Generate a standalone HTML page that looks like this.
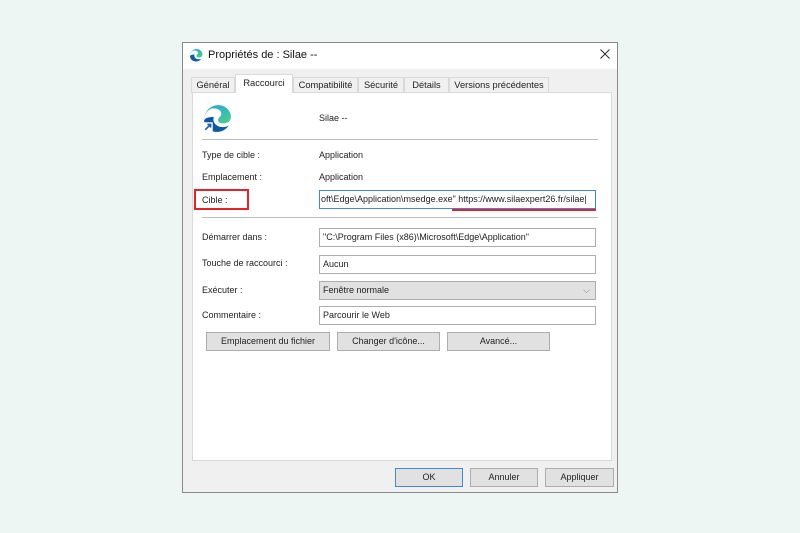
<!DOCTYPE html>
<html><head><meta charset="utf-8"><style>
*{margin:0;padding:0;box-sizing:border-box}
body{width:800px;height:533px;background:#eef6f4;position:relative;overflow:hidden;font-family:"Liberation Sans",sans-serif;font-size:9px;color:#222}
.a{position:absolute;white-space:nowrap}
.win{left:182px;top:42px;width:436px;height:451px;background:#f0f0f0;border:1px solid #888}
.title{left:183px;top:43px;width:434px;height:26px;background:#fff}
.tab{position:absolute;top:77px;height:16px;border:1px solid #d9d9d9;border-bottom:none;background:#f0f0f0;text-align:center;line-height:15px;font-size:9.3px}
.panel{left:192px;top:92px;width:420px;height:369px;background:#fff;border:1px solid #d9d9d9}
.sep{position:absolute;left:202px;width:396px;height:1px;background:#bbb}
.inp{position:absolute;left:319px;width:277px;height:19px;border:1px solid #adadad;background:#fff;padding-left:3px;line-height:17px;overflow:hidden;white-space:nowrap}
.btn{position:absolute;height:19px;background:#e1e1e1;border:1px solid #adadad;text-align:center;line-height:17px}
</style></head><body>
<div class="a win"></div>
<div class="a title"></div>
<svg class="a" style="left:189px;top:48px" width="14" height="14" viewBox="0 0 28 28">
<defs><linearGradient id="g" x1="0" y1="0" x2="1" y2="1"><stop offset="0" stop-color="#1fa0e0"/><stop offset="1" stop-color="#4fd08a"/></linearGradient></defs>
<path d="M2 16C2 7 9 2 15 2c7 0 12 5 12 11 0 4-3 6-7 6-3 0-5-1-5-3 0-3 3-3 3-6 0-3-3-5-7-5C6 5 2 10 2 16z" fill="url(#g)"/>
<path d="M2 16c0 7 6 11 12 11 5 0 9-3 11-6-3 2-8 2-11 0-3-2-4-5-3-8-4 0-8 1-9 3z" fill="#0c59a4"/></svg>
<div class="a" style="left:208px;top:49px;font-size:11px;color:#111">Propriétés de : Silae --</div>
<svg class="a" style="left:600px;top:49px" width="10" height="10" viewBox="0 0 10 10"><path d="M0.5 0.5L9.5 9.5M9.5 0.5L0.5 9.5" stroke="#333" stroke-width="1.1"/></svg>
<div class="tab" style="left:191px;width:44px">Général</div>
<div class="tab" style="left:235px;top:74px;height:19px;width:58px;background:#fff;z-index:2;line-height:16px">Raccourci</div>
<div class="tab" style="left:293px;width:65px">Compatibilité</div>
<div class="tab" style="left:358px;width:46px">Sécurité</div>
<div class="tab" style="left:404px;width:45px">Détails</div>
<div class="tab" style="left:449px;width:100px">Versions précédentes</div>
<div class="a panel"></div>
<svg class="a" style="left:202px;top:103px" width="30" height="30" viewBox="0 0 28 28">
<path d="M2 16C2 7 9 2 15 2c7 0 12 5 12 11 0 4-3 6-7 6-3 0-5-1-5-3 0-3 3-3 3-6 0-3-3-5-7-5C6 5 2 10 2 16z" fill="url(#g)"/>
<path d="M2 16c0 7 6 11 12 11 5 0 9-3 11-6-3 2-8 2-11 0-3-2-4-5-3-8-4 0-8 1-9 3z" fill="#0c59a4"/>
<rect x="1" y="18" width="9" height="9" fill="#fff"/><path d="M3 25l5-5M5 20h3v3" stroke="#1a5fb4" stroke-width="1.5" fill="none"/></svg>
<div class="a" style="left:319px;top:113px">Silae --</div>
<div class="sep" style="top:139px"></div>
<div class="a" style="left:202px;top:150px">Type de cible :</div>
<div class="a" style="left:319px;top:150px">Application</div>
<div class="a" style="left:202px;top:172px">Emplacement :</div>
<div class="a" style="left:319px;top:172px">Application</div>
<div class="a" style="left:194px;top:189px;width:55px;height:21px;border:2px solid #e8202a"></div>
<div class="a" style="left:202px;top:195px">Cible :</div>
<div class="inp" style="top:190px;border-color:#3c8ad8;padding-left:1px">oft\Edge\Application\msedge.exe" https://www.silaexpert26.fr/silae|</div>
<div class="a" style="left:452px;top:209px;width:144px;height:2px;background:#e8202a"></div>
<div class="sep" style="top:217px"></div>
<div class="a" style="left:202px;top:232px">Démarrer dans :</div>
<div class="inp" style="top:228px">"C:\Program Files (x86)\Microsoft\Edge\Application"</div>
<div class="a" style="left:202px;top:258px">Touche de raccourci :</div>
<div class="inp" style="top:255px">Aucun</div>
<div class="a" style="left:202px;top:285px">Exécuter :</div>
<div class="inp" style="top:281px;background:#e1e1e1;height:19px">Fenêtre normale<span style="position:absolute;right:5px;top:0;color:#777">⌵</span></div>
<div class="a" style="left:202px;top:310px">Commentaire :</div>
<div class="inp" style="top:306px">Parcourir le Web</div>
<div class="btn" style="left:206px;top:332px;width:124px">Emplacement du fichier</div>
<div class="btn" style="left:337px;top:332px;width:103px">Changer d'icône...</div>
<div class="btn" style="left:447px;top:332px;width:103px">Avancé...</div>
<div class="btn" style="left:395px;top:468px;width:68px;border:1px solid #3c8ad8">OK</div>
<div class="btn" style="left:470px;top:468px;width:68px">Annuler</div>
<div class="btn" style="left:545px;top:468px;width:69px">Appliquer</div>
</body></html>
